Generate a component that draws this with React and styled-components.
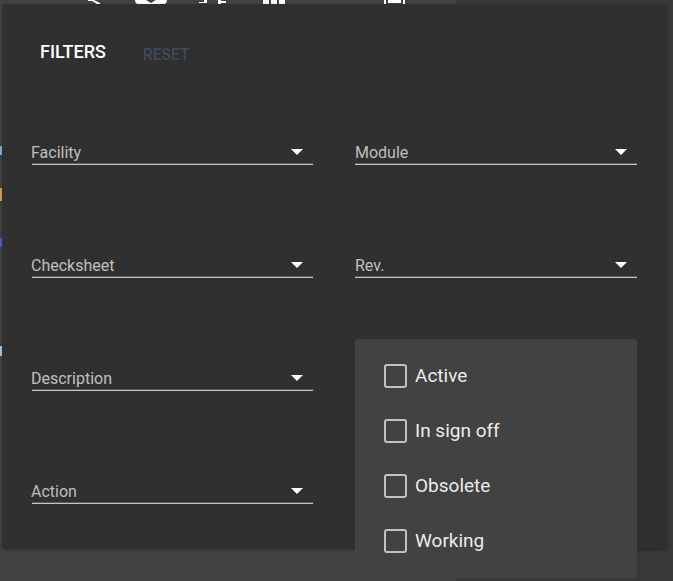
import React from 'react';
import styled, { createGlobalStyle } from 'styled-components';

const GlobalStyle = createGlobalStyle`
  html, body {
    margin: 0;
    padding: 0;
    height: 100%;
    background: #383838;
    overflow: hidden;
  }
  #root {
    height: 100%;
  }
`;

const Page = styled.div`
  position: relative;
  width: 673px;
  height: 581px;
  overflow: hidden;
  display: flex;
  font-family: Roboto, sans-serif;
`;

const Behind = styled.div`
  width: 456px;
  height: 100%;
  background: #424242;
`;

const TopIcons = styled.div`
  display: flex;
  align-items: flex-start;
  height: 4px;
  padding-left: 88px;
  overflow: hidden;
`;

const TopIcon = styled.svg`
  flex: none;
  display: block;
  margin-left: ${(props) => props.$gap}px;
  fill: #fff;
`;

const EdgeMark = styled.span`
  position: absolute;
  left: 0;
  top: ${(props) => props.top}px;
  width: 2px;
  height: ${(props) => props.h}px;
  background: ${(props) => props.color};
`;

const Panel = styled.div`
  position: absolute;
  left: 2px;
  top: 4px;
  width: 665px;
  height: 545px;
  box-sizing: border-box;
  padding: 0 29px;
  background: #303030;
  border-radius: 4px;
  box-shadow: 0 1px 3px rgba(0, 0, 0, 0.3);
`;

const Header = styled.div`
  display: flex;
  align-items: flex-start;
  height: 55px;
  padding: 37px 0 0 9px;
`;

const Title = styled.h2`
  margin: 0;
  font-size: 18px;
  line-height: 22px;
  font-weight: 500;
  color: #fff;
`;

const ResetButton = styled.span`
  margin: 3px 0 0 37px;
  font-size: 15.6px;
  line-height: 22px;
  font-weight: 500;
  color: #3e4b5b;
`;

const Fields = styled.div`
  display: grid;
  grid-template-columns: 282px 282px;
  column-gap: 42px;
  grid-auto-rows: 113px;
  margin-top: 36px;
`;

const Select = styled.div`
  align-self: start;
  display: flex;
  align-items: flex-start;
  justify-content: space-between;
  height: 25px;
  margin-top: 8px;
  margin-left: ${(props) => (props.$inset ? 1 : 0)}px;
  padding-top: 3px;
  box-sizing: border-box;
  border-bottom: 1px solid #c4c4c4;
  box-shadow: inset 0 -1px 0 rgba(196, 196, 196, 0.3);
`;

const SelectLabel = styled.span`
  margin-left: ${(props) => (props.$inset ? -1 : 0)}px;
  font-size: 16px;
  color: rgba(255, 255, 255, 0.7);
`;

const Caret = styled.span`
  width: 0;
  height: 0;
  margin-top: 6px;
  margin-right: 10px;
  border-left: 6.5px solid transparent;
  border-right: 6.5px solid transparent;
  border-top: 6.5px solid #fff;
`;

const StatusMenu = styled.div`
  position: absolute;
  left: 355px;
  top: 339px;
  width: 282px;
  height: 240px;
  box-sizing: border-box;
  padding: 9px 0 9px 29px;
  background: #424242;
  border-radius: 4px;
  display: flex;
  flex-direction: column;
`;

const StatusRow = styled.label`
  display: flex;
  align-items: center;
  height: 55px;
  gap: 8px;
  font-size: 19px;
  color: rgba(255, 255, 255, 0.92);
`;

const CheckBox = styled.span`
  width: 23px;
  height: 24px;
  box-sizing: border-box;
  border: 2px solid #c2c2c2;
  border-radius: 3px;
`;

const edgeMarks = [
  { top: 146, h: 9, color: '#7fb2f0' },
  { top: 188, h: 13, color: '#d9a35a' },
  { top: 238, h: 9, color: '#4a5fe0' },
  { top: 346, h: 10, color: '#9fd0f5' },
];

const leftFields = ['Facility', 'Checksheet', 'Description', 'Action'];
const rightFields = ['Module', 'Rev.'];
const statuses = ['Active', 'In sign off', 'Obsolete', 'Working'];

function Field({ label, inset }) {
  return (
    <Select $inset={inset}>
      <SelectLabel $inset={inset}>{label}</SelectLabel>
      <Caret />
    </Select>
  );
}

export default function App() {
  return (
    <Page>
      <GlobalStyle />
      <Behind>
        <TopIcons>
          {/* tops of the toolbar icons behind the dialog */}
          <TopIcon $gap={0} width="13" height="4" viewBox="0 0 13 4">
            <path d="M0 0h6l6 3v1H9L4 1H0z" />
          </TopIcon>
          <TopIcon $gap={34} width="32" height="4" viewBox="0 0 32 4">
            <path d="M0 0h11l5 3 5-3h11c0 2-1 4-3 4H3C1 4 0 2 0 0z" />
          </TopIcon>
          <TopIcon $gap={32} width="8" height="4" viewBox="0 0 8 4">
            <path d="M5 0h3v3H0V2h5z" />
          </TopIcon>
          <TopIcon $gap={11} width="8" height="4" viewBox="0 0 8 4">
            <path d="M0 0h3v1h5v2H3v1H0z" />
          </TopIcon>
          <TopIcon $gap={37} width="22" height="4" viewBox="0 0 22 4">
            <path d="M0 0h6v4H0zM8 0h6v4H8zM16 0h6v4h-6z" />
          </TopIcon>
          <TopIcon $gap={99} width="21" height="4" viewBox="0 0 21 4">
            <path d="M0 0h2v4H0zM19 0h2v4h-2zM4 0h13v3H4z" />
          </TopIcon>
        </TopIcons>
      </Behind>
      {edgeMarks.map((m) => (
        <EdgeMark key={m.top} top={m.top} h={m.h} color={m.color} />
      ))}
      <Panel>
        <Header>
          <Title>FILTERS</Title>
          <ResetButton>RESET</ResetButton>
        </Header>
        <Fields>
          {leftFields.map((label, i) => (
            <React.Fragment key={label}>
              <Field label={label} inset />
              {rightFields[i] ? <Field label={rightFields[i]} /> : <div />}
            </React.Fragment>
          ))}
        </Fields>
      </Panel>
      <StatusMenu>
        {statuses.map((s) => (
          <StatusRow key={s}>
            <CheckBox />
            {s}
          </StatusRow>
        ))}
      </StatusMenu>
    </Page>
  );
}
